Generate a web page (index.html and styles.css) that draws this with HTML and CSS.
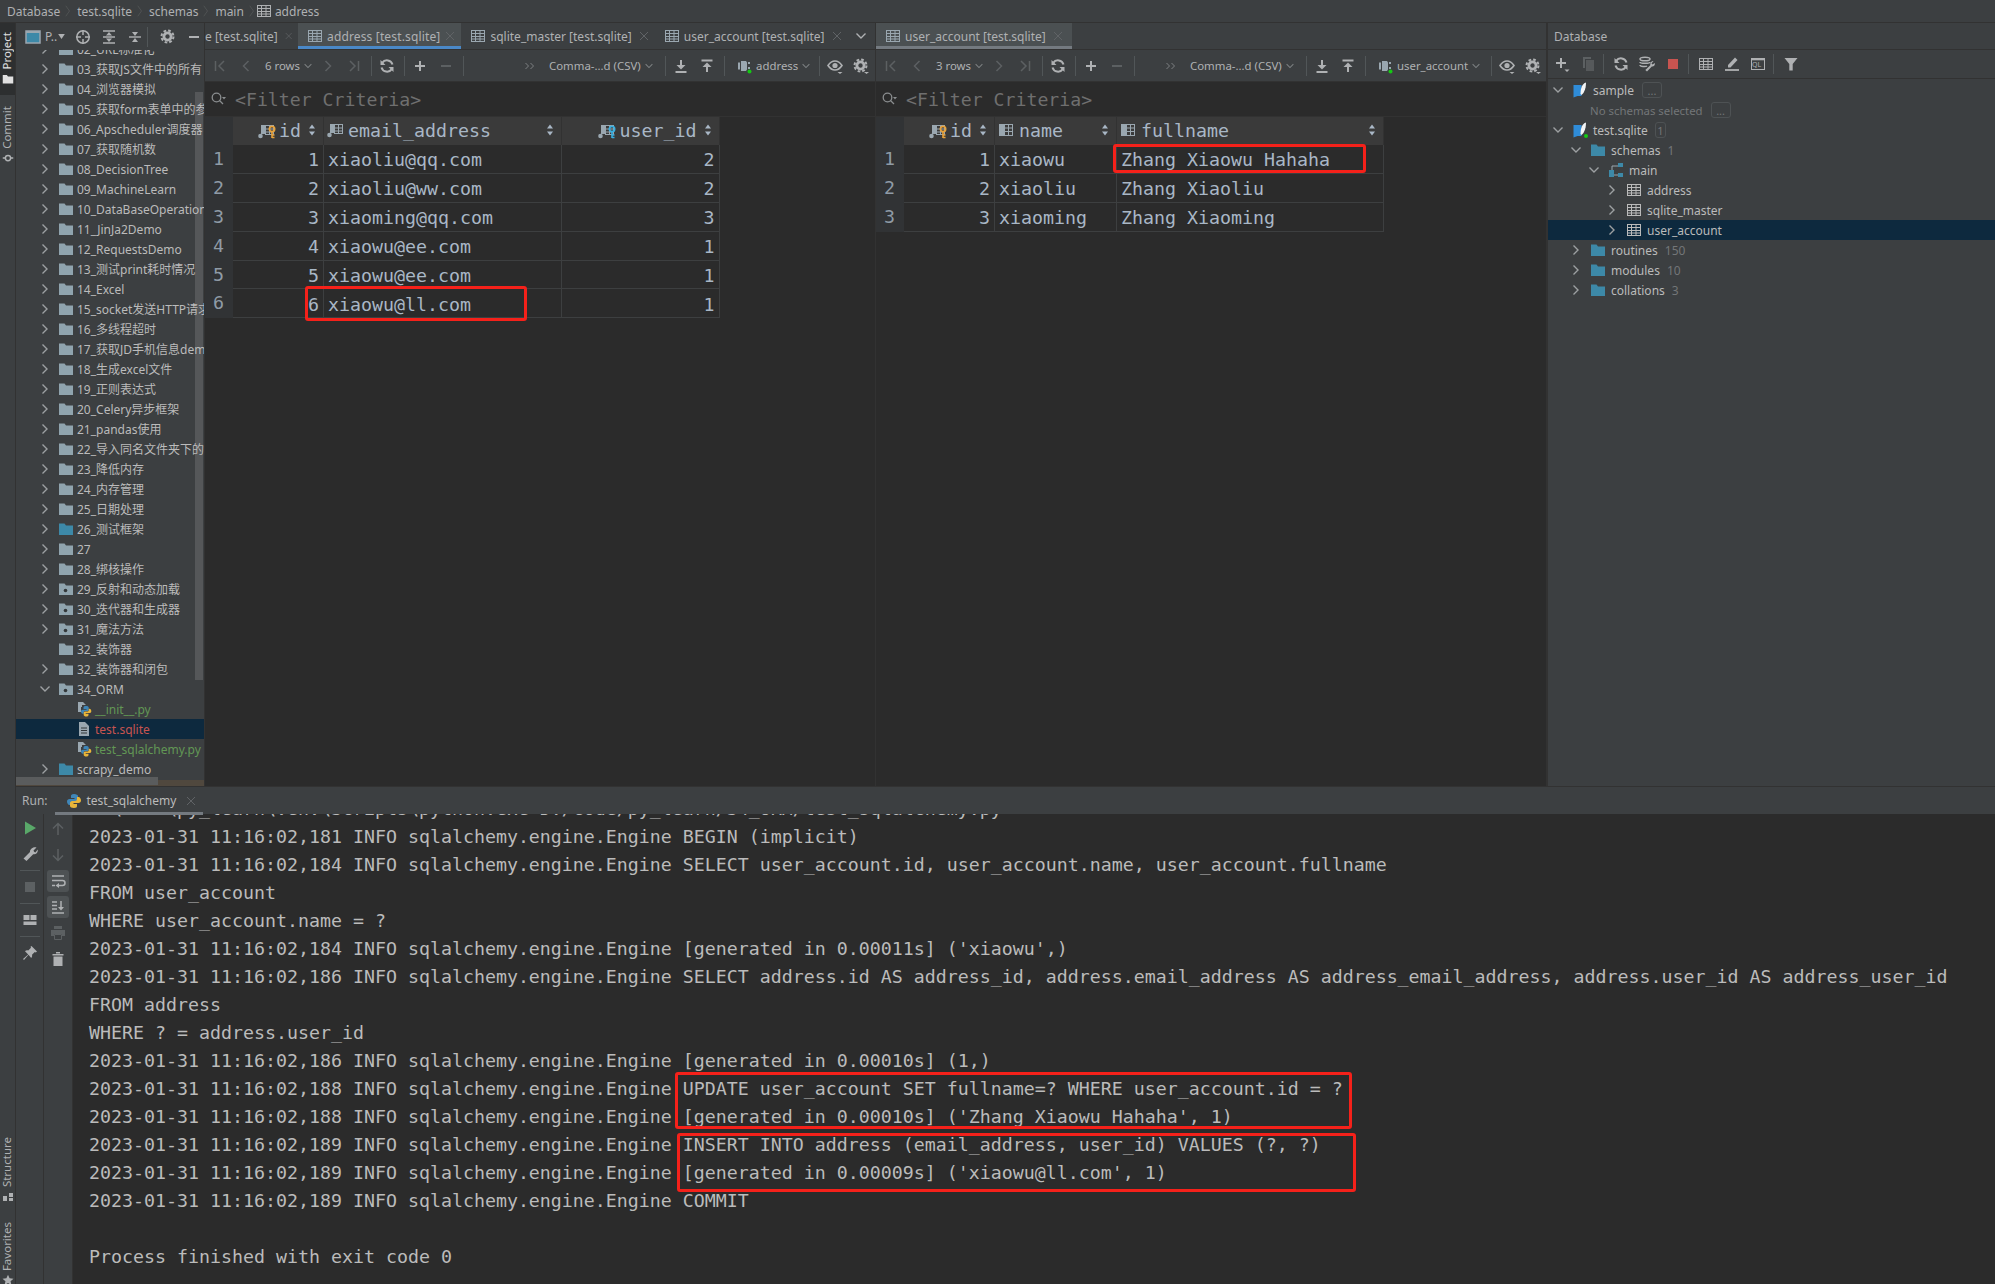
FILE: index.html
```html
<!DOCTYPE html>
<html lang="en">
<head>
    <meta charset="UTF-8">
    <title>test.sqlite - address</title>
    <link rel="stylesheet" href="styles.css">
</head>
<body>

<svg class="sprite" xmlns="http://www.w3.org/2000/svg">
    <symbol id="chev-r" viewBox="0 0 16 16"><path d="M5.5 3.5 10 8l-4.500 4.500" fill="none" stroke="currentColor" stroke-width="1.400"/></symbol>
    <symbol id="chev-d" viewBox="0 0 16 16"><path d="M3.500 5.500 8 10l4.500-4.500" fill="none" stroke="currentColor" stroke-width="1.400"/></symbol>
    <symbol id="folder" viewBox="0 0 16 16"><path d="M1 2.500h5.500L8 4.500h7v9.500H1z" fill="currentColor"/></symbol>
    <symbol id="folder-dot" viewBox="0 0 16 16"><path d="M1 2.500h5.500L8 4.500h7v9.500H1z" fill="currentColor"/><circle cx="7.500" cy="9.500" r="1.800" fill="#33383a"/></symbol>
    <symbol id="table" viewBox="0 0 16 16"><g fill="none" stroke="currentColor"><rect x="1.500" y="2.500" width="13" height="11"/><path d="M1.500 5.500h13M1.500 8.500h13M1.500 11h13M5.500 2.500v11M10 2.500v11"/></g></symbol>
    <symbol id="first" viewBox="0 0 16 16"><path d="M3.500 3v10M12 3 7 8l5 5" fill="none" stroke="currentColor" stroke-width="1.500"/></symbol>
    <symbol id="prev" viewBox="0 0 16 16"><path d="M10.500 3 5.500 8l5 5" fill="none" stroke="currentColor" stroke-width="1.500"/></symbol>
    <symbol id="next" viewBox="0 0 16 16"><path d="m5.500 3 5 5-5 5" fill="none" stroke="currentColor" stroke-width="1.500"/></symbol>
    <symbol id="last" viewBox="0 0 16 16"><path d="M12.500 3v10M4 3l5 5-5 5" fill="none" stroke="currentColor" stroke-width="1.500"/></symbol>
    <symbol id="refresh" viewBox="0 0 16 16"><g fill="none" stroke="currentColor" stroke-width="2"><path d="M13.500 6.500A5.800 5.800 0 0 0 3.200 4.800"/><path d="M2.500 9.500a5.800 5.800 0 0 0 10.300 1.700"/></g><path d="M1.500 2v5h5zM14.500 14V9h-5z" fill="currentColor"/></symbol>
    <symbol id="plus" viewBox="0 0 16 16"><path d="M8 3v10M3 8h10" stroke="currentColor" stroke-width="2"/></symbol>
    <symbol id="plus-drop" viewBox="0 0 16 16"><path d="M7 2v10M2 7h10" stroke="currentColor" stroke-width="2"/><path d="M10.500 13.500h5L13 16z" fill="currentColor"/></symbol>
    <symbol id="minus" viewBox="0 0 16 16"><path d="M3 8h10" stroke="currentColor" stroke-width="2"/></symbol>
    <symbol id="more" viewBox="0 0 16 16"><path d="m3.500 5 3 3-3 3M8.500 5l3 3-3 3" fill="none" stroke="currentColor"/></symbol>
    <symbol id="download" viewBox="0 0 16 16"><path d="M2.500 14h11" stroke="currentColor" stroke-width="2"/><path d="M8 2v7" stroke="currentColor" stroke-width="2"/><path d="M3.500 7h9L8 11.500z" fill="currentColor"/></symbol>
    <symbol id="upload" viewBox="0 0 16 16"><path d="M2.500 2.500h11" stroke="currentColor" stroke-width="2"/><path d="M8 14V7" stroke="currentColor" stroke-width="2"/><path d="M3.500 9h9L8 4.500z" fill="currentColor"/></symbol>
    <symbol id="datasource" viewBox="0 0 16 16"><path d="M1 4.500h2v7H1zM4 3h5l1 1.500v7L9 13H4z" fill="currentColor"/><path d="M11 4h2v2h-2zM11 9h2v2h-2z" fill="currentColor"/><circle cx="12.500" cy="13.500" r="2" fill="#14c914"/></symbol>
    <symbol id="eye" viewBox="0 0 16 16"><path d="M1 7.500C3 4.500 5.300 3 8 3s5 1.500 7 4.500c-2 3-4.300 4.500-7 4.500S3 10.500 1 7.500z" fill="none" stroke="currentColor" stroke-width="1.600"/><circle cx="8" cy="7.500" r="2.600" fill="currentColor"/><path d="M10.500 14h5L13 16z" fill="currentColor"/></symbol>
    <symbol id="gear" viewBox="0 0 16 16"><circle cx="7.500" cy="7.500" r="3.600" fill="none" stroke="currentColor" stroke-width="2.800"/><circle cx="7.500" cy="7.500" r="6" fill="none" stroke="currentColor" stroke-width="2" stroke-dasharray="2.700 2"/></symbol>
    <symbol id="gear-drop" viewBox="0 0 16 16"><use href="#gear"/><path d="M11 14h5l-2.500 2z" fill="currentColor"/></symbol>
    <symbol id="search" viewBox="0 0 16 16"><circle cx="6.500" cy="6.500" r="4.300" fill="none" stroke="currentColor" stroke-width="1.300"/><path d="m9.500 9.500 3.500 3.500" stroke="currentColor" stroke-width="1.300"/><path d="M12 6h4l-2 2.500z" fill="currentColor"/></symbol>
    <symbol id="close" viewBox="0 0 10 10"><path d="m1 1 8 8M9 1 1 9" stroke="currentColor"/></symbol>
    <symbol id="sort" viewBox="0 0 10 14"><path d="M5 1.500 8 5.500H2zM5 12.500 2 8.500h6z" fill="currentColor"/></symbol>
    <symbol id="col" viewBox="0 0 16 16"><path d="M1 2h5v12H1z" fill="currentColor"/><g fill="none" stroke="currentColor"><rect x="6.500" y="2.500" width="8" height="11"/><path d="M6.500 6h8M6.500 9.500h8M10.500 2.500v11"/></g></symbol>
    <symbol id="col-fk" viewBox="0 0 16 16"><path d="M3 2h4v9H3z" fill="currentColor"/><g fill="none" stroke="currentColor"><rect x="7.500" y="2.500" width="8" height="9"/><path d="M7.500 6h8M7.500 9h8M11.500 2.500v9"/></g><circle cx="2.500" cy="13" r="2.300" fill="currentColor"/></symbol>
    <symbol id="key" viewBox="0 0 8 14"><circle cx="4" cy="4" r="2.600" fill="none" stroke="currentColor" stroke-width="1.800"/><path d="M4 6.500V13M4 10h2.500M4 12.500h2.500" stroke="currentColor" stroke-width="1.600"/></symbol>
    <symbol id="window" viewBox="0 0 16 16"><rect x="1" y="2" width="14" height="12" fill="#3d89a8" stroke="#9aa7b0" stroke-width="1.500"/><path d="M1 3h14" stroke="#9aa7b0" stroke-width="2"/></symbol>
    <symbol id="crosshair" viewBox="0 0 16 16"><circle cx="8" cy="8" r="6.200" fill="none" stroke="currentColor" stroke-width="1.500"/><path d="M8 1v5M8 10v5M1 8h5M10 8h5" stroke="currentColor" stroke-width="1.500"/></symbol>
    <symbol id="expand" viewBox="0 0 16 16"><path d="M2 2h12M2 14h12M2 8h12" stroke="currentColor" stroke-width="1.400"/><path d="M8 3 11 6.500H5zM8 13 5 9.500h6z" fill="currentColor"/></symbol>
    <symbol id="collapse" viewBox="0 0 16 16"><path d="M2 8h12" stroke="currentColor" stroke-width="1.400"/><path d="M8 7 5 3h6zM8 9l3 4H5z" fill="currentColor"/></symbol>
    <symbol id="copy" viewBox="0 0 16 16"><path d="M3 1h8v2H5v9H3z" fill="currentColor"/><path d="M6 4h8v11H6z" fill="currentColor" opacity=".8"/></symbol>
    <symbol id="tools" viewBox="0 0 16 16"><g fill="none" stroke="currentColor" stroke-width="1.500"><ellipse cx="6" cy="3" rx="5" ry="1.800"/><path d="M1 6c0 1.800 10 1.800 10 0M1 9c0 1.800 6 1.800 7 1"/></g><path d="m14.500 5-2 2.500 1 1L15.800 7c.5 2-1 4-3 3.500L8 15.500 6.300 14l5-4.800c-.5-2 1.300-4.500 3.200-4.200z" fill="currentColor"/></symbol>
    <symbol id="edit" viewBox="0 0 16 16"><path d="M1 14h14" stroke="currentColor" stroke-width="1.800"/><path d="M4 11.500V9l7-7.500 2.500 2.500-7 7.500z" fill="currentColor"/></symbol>
    <symbol id="ql" viewBox="0 0 16 16"><rect x="1.500" y="2.500" width="13" height="11" fill="none" stroke="currentColor"/><path d="M1.500 3.500h13" stroke="currentColor" stroke-width="1.600"/></symbol>
    <symbol id="filter" viewBox="0 0 16 16"><path d="M1.500 2h13L9.700 8v6.500H6.300V8z" fill="currentColor"/></symbol>
    <symbol id="sqlite" viewBox="0 0 16 16"><path d="M1.500 3h8v11h-4l-4 1.500z" fill="#2f8cd8"/><path d="M14 .5c-2.500.5-4.200 3-5 6.500-.3 1.500-.5 3-.5 5l1 1c2-1.500 4.500-5.500 4.500-12.500z" fill="#f2f4f5"/></symbol>
    <symbol id="schema" viewBox="0 0 16 16"><path d="M10 1h5v4h-5zM1 8h5v7H1zM10 11h5v4h-5z" fill="#3d89a8"/><path d="M4 8V4h6M6 13h4" fill="none" stroke="#9aa7b0"/></symbol>
    <symbol id="py" viewBox="0 0 16 16"><path d="M8 1C5.500 1 5 2 5 3v2h3.500v1H3.500C2 6 1 7 1 8.500S2 12 3.500 12H5v-2c0-1 1-2 2-2h3c1 0 2-1 2-2V3c0-1-1.500-2-4-2z" fill="#3f86b8"/><path d="M8 15c2.500 0 3-1 3-2v-2H7.500v-1h5c1.500 0 2.500-1 2.500-2.500S14 4 12.500 4H11v2c0 1-1 2-2 2H6c-1 0-2 1-2 2v3c0 1 1.500 2 4 2z" fill="#e8b53a"/></symbol>
    <symbol id="py-file" viewBox="0 0 16 16"><path d="M2 6V1h5l3 3H6v2zM2 6h3v5H2z" fill="#9aa7b0"/><path d="M10 5c-2 0-2.500.7-2.500 1.500V8h3v.7H6.800C5.700 8.700 5 9.500 5 10.500s.7 2.300 1.800 2.300h.9v-1.300c0-.8.7-1.400 1.500-1.400h2c.8 0 1.500-.7 1.500-1.500V6.500C12.700 5.700 11.800 5 10 5z" fill="#3f86b8"/><path d="M10 15.500c2 0 2.500-.7 2.500-1.500v-1.300h-2.800V12h3.800c1.100 0 1.800-.8 1.800-1.800s-.7-2.400-1.800-2.400h-.8V9c0 .9-.7 1.600-1.500 1.600h-2c-.8 0-1.500.6-1.500 1.400V14c0 .8 1 1.500 2.800 1.500z" fill="#e8b53a"/></symbol>
    <symbol id="doc" viewBox="0 0 16 16"><path d="M3 1h6l4 4v10H3z" fill="#9aa7b0"/><path d="M5 7h6M5 9.500h6M5 12h6" stroke="#33383a"/></symbol>
    <symbol id="play" viewBox="0 0 16 16"><path d="M3 1.500 14 8 3 14.500z" fill="#59a869"/></symbol>
    <symbol id="wrench" viewBox="0 0 16 16"><path d="M14.500 1.500 11.500 4.500l.6 1.300 1.300.6 2.300-2.800c.6 2.800-1.800 5.300-4.500 4.600L4.500 15 1.500 12.500 8 6c-.5-2.700 3.500-5.500 6.500-4.500z" fill="currentColor"/></symbol>
    <symbol id="stop" viewBox="0 0 16 16"><rect x="3" y="3" width="10" height="10" fill="currentColor"/></symbol>
    <symbol id="layout" viewBox="0 0 16 16"><path d="M1.500 3h6v5h-6zM8.500 3h6v5h-6zM1.500 9.500h13V13h-13z" fill="currentColor"/></symbol>
    <symbol id="pin" viewBox="0 0 16 16"><path d="m9.500 1 5.500 5.500-1.200 1-1-.5-2.800 2.800c.4 1.400 0 2.500-.8 3.200L6.500 9.800 2 15l-1-1 5.200-4.500L3 6.300c.7-.8 1.800-1.200 3.200-.8L9 2.700l-.5-1z" fill="currentColor"/></symbol>
    <symbol id="up" viewBox="0 0 16 16"><path d="M8 14V3M3 7.500 8 2.500l5 5" fill="none" stroke="currentColor" stroke-width="1.500"/></symbol>
    <symbol id="down" viewBox="0 0 16 16"><path d="M8 2v11M3 8.500l5 5 5-5" fill="none" stroke="currentColor" stroke-width="1.500"/></symbol>
    <symbol id="wrap" viewBox="0 0 16 16"><path d="M2 3h12M2 7.500h10.500a2.300 2.300 0 0 1 0 5H8M2 12.500h3" fill="none" stroke="currentColor" stroke-width="1.500"/><path d="M9 10v5l-3.500-2.500z" fill="currentColor"/></symbol>
    <symbol id="scroll" viewBox="0 0 16 16"><path d="M2 14h12M2 3h5M2 6.500h5M2 10h5M11 2v7" fill="none" stroke="currentColor" stroke-width="1.500"/><path d="M8 8h6l-3 3.500z" fill="currentColor"/></symbol>
    <symbol id="print" viewBox="0 0 16 16"><path d="M4 1h8v3H4zM1 5h14v6h-3V9H4v2H1z" fill="currentColor"/><path d="M4.500 9.500h7v5h-7z" fill="none" stroke="currentColor"/></symbol>
    <symbol id="trash" viewBox="0 0 16 16"><path d="M2.500 3h11v1.500h-11zM6 1h4v1.500H6zM3.500 5.500h9V15h-9z" fill="currentColor"/></symbol>
    <symbol id="squares" viewBox="0 0 12 12"><path d="M1 6h4v5H1zM7 8h4v3H7zM7 3h4v4H7z" fill="currentColor"/></symbol>
    <symbol id="star" viewBox="0 0 16 16"><path d="m8 1 2.100 4.800 5.200.5-3.900 3.400 1.200 5.100L8 12.100l-4.600 2.700 1.200-5.100L.7 6.300l5.200-.5z" fill="currentColor"/></symbol>
</svg>

<div class="ide">

    <!-- barre du haut -->
    <nav class="crumbs">
        <span>Database</span><svg class="crumb-sep" viewBox="0 0 8 16"><path d="m1 1 5 7-5 7" fill="none" stroke="currentColor"/></svg>
        <span>test.sqlite</span><svg class="crumb-sep" viewBox="0 0 8 16"><path d="m1 1 5 7-5 7" fill="none" stroke="currentColor"/></svg>
        <span>schemas</span><svg class="crumb-sep" viewBox="0 0 8 16"><path d="m1 1 5 7-5 7" fill="none" stroke="currentColor"/></svg>
        <span>main</span><svg class="crumb-sep" viewBox="0 0 8 16"><path d="m1 1 5 7-5 7" fill="none" stroke="currentColor"/></svg>
        <svg class="icon crumb-icon"><use href="#table"/></svg><span>address</span>
    </nav>

    <div class="main">

        <aside class="strip">
            <div class="strip-tab strip-active"><span>Project</span><svg class="strip-icon"><use href="#folder"/></svg></div>
            <div class="strip-tab strip-commit"><span>Commit</span><svg class="strip-icon" viewBox="0 0 16 16"><circle cx="8" cy="8" r="3.500" fill="none" stroke="currentColor" stroke-width="2"/><path d="M1 8h3M12 8h3" stroke="currentColor" stroke-width="2"/></svg></div>
            <div class="strip-tab strip-structure"><span>Structure</span><svg class="strip-icon"><use href="#squares"/></svg></div>
            <div class="strip-tab strip-favorites"><span>Favorites</span><svg class="strip-icon"><use href="#star"/></svg></div>
        </aside>

        <div class="workspace">
            <div class="top">

                <!-- Project -->
                <section class="project">
                    <div class="project-head">
                        <svg class="icon"><use href="#window"/></svg>
                        <span class="project-title">P..</span>
                        <svg class="project-drop" viewBox="0 0 8 6"><path d="M0 0h8L4 6z" fill="currentColor"/></svg>
                        <svg class="icon icon-cross"><use href="#crosshair"/></svg>
                        <svg class="icon icon-head"><use href="#expand"/></svg>
                        <svg class="icon icon-head"><use href="#collapse"/></svg>
                        <i class="sep sep-head"></i>
                        <svg class="icon icon-gear"><use href="#gear"/></svg>
                        <svg class="icon icon-head"><use href="#minus"/></svg>
                    </div>
                    <div class="vscroll"></div>
                    <div class="file-tree">
                        <div class="row"><svg class="arrow"><use href="#chev-r"/></svg><svg class="icon folder"><use href="#folder"/></svg><span>02_URL标准化</span></div>
                        <div class="row"><svg class="arrow"><use href="#chev-r"/></svg><svg class="icon folder"><use href="#folder"/></svg><span>03_获取JS文件中的所有</span></div>
                        <div class="row"><svg class="arrow"><use href="#chev-r"/></svg><svg class="icon folder"><use href="#folder"/></svg><span>04_浏览器模拟</span></div>
                        <div class="row"><svg class="arrow"><use href="#chev-r"/></svg><svg class="icon folder"><use href="#folder"/></svg><span>05_获取form表单中的参数</span></div>
                        <div class="row"><svg class="arrow"><use href="#chev-r"/></svg><svg class="icon folder"><use href="#folder"/></svg><span>06_Apscheduler调度器</span></div>
                        <div class="row"><svg class="arrow"><use href="#chev-r"/></svg><svg class="icon folder"><use href="#folder"/></svg><span>07_获取随机数</span></div>
                        <div class="row"><svg class="arrow"><use href="#chev-r"/></svg><svg class="icon folder"><use href="#folder"/></svg><span>08_DecisionTree</span></div>
                        <div class="row"><svg class="arrow"><use href="#chev-r"/></svg><svg class="icon folder"><use href="#folder"/></svg><span>09_MachineLearn</span></div>
                        <div class="row"><svg class="arrow"><use href="#chev-r"/></svg><svg class="icon folder"><use href="#folder"/></svg><span>10_DataBaseOperation</span></div>
                        <div class="row"><svg class="arrow"><use href="#chev-r"/></svg><svg class="icon folder"><use href="#folder"/></svg><span>11_JinJa2Demo</span></div>
                        <div class="row"><svg class="arrow"><use href="#chev-r"/></svg><svg class="icon folder"><use href="#folder"/></svg><span>12_RequestsDemo</span></div>
                        <div class="row"><svg class="arrow"><use href="#chev-r"/></svg><svg class="icon folder"><use href="#folder"/></svg><span>13_测试print耗时情况</span></div>
                        <div class="row"><svg class="arrow"><use href="#chev-r"/></svg><svg class="icon folder"><use href="#folder"/></svg><span>14_Excel</span></div>
                        <div class="row"><svg class="arrow"><use href="#chev-r"/></svg><svg class="icon folder"><use href="#folder"/></svg><span>15_socket发送HTTP请求</span></div>
                        <div class="row"><svg class="arrow"><use href="#chev-r"/></svg><svg class="icon folder"><use href="#folder"/></svg><span>16_多线程超时</span></div>
                        <div class="row"><svg class="arrow"><use href="#chev-r"/></svg><svg class="icon folder"><use href="#folder"/></svg><span>17_获取JD手机信息demo</span></div>
                        <div class="row"><svg class="arrow"><use href="#chev-r"/></svg><svg class="icon folder"><use href="#folder"/></svg><span>18_生成excel文件</span></div>
                        <div class="row"><svg class="arrow"><use href="#chev-r"/></svg><svg class="icon folder"><use href="#folder"/></svg><span>19_正则表达式</span></div>
                        <div class="row"><svg class="arrow"><use href="#chev-r"/></svg><svg class="icon folder"><use href="#folder"/></svg><span>20_Celery异步框架</span></div>
                        <div class="row"><svg class="arrow"><use href="#chev-r"/></svg><svg class="icon folder"><use href="#folder"/></svg><span>21_pandas使用</span></div>
                        <div class="row"><svg class="arrow"><use href="#chev-r"/></svg><svg class="icon folder"><use href="#folder"/></svg><span>22_导入同名文件夹下的</span></div>
                        <div class="row"><svg class="arrow"><use href="#chev-r"/></svg><svg class="icon folder"><use href="#folder"/></svg><span>23_降低内存</span></div>
                        <div class="row"><svg class="arrow"><use href="#chev-r"/></svg><svg class="icon folder"><use href="#folder"/></svg><span>24_内存管理</span></div>
                        <div class="row"><svg class="arrow"><use href="#chev-r"/></svg><svg class="icon folder"><use href="#folder"/></svg><span>25_日期处理</span></div>
                        <div class="row"><svg class="arrow"><use href="#chev-r"/></svg><svg class="icon folder-blue"><use href="#folder"/></svg><span>26_测试框架</span></div>
                        <div class="row"><svg class="arrow"><use href="#chev-r"/></svg><svg class="icon folder"><use href="#folder"/></svg><span>27</span></div>
                        <div class="row"><svg class="arrow"><use href="#chev-r"/></svg><svg class="icon folder"><use href="#folder"/></svg><span>28_绑核操作</span></div>
                        <div class="row"><svg class="arrow"><use href="#chev-r"/></svg><svg class="icon folder"><use href="#folder-dot"/></svg><span>29_反射和动态加载</span></div>
                        <div class="row"><svg class="arrow"><use href="#chev-r"/></svg><svg class="icon folder"><use href="#folder-dot"/></svg><span>30_迭代器和生成器</span></div>
                        <div class="row"><svg class="arrow"><use href="#chev-r"/></svg><svg class="icon folder"><use href="#folder-dot"/></svg><span>31_魔法方法</span></div>
                        <div class="row row-leaf"><svg class="icon folder"><use href="#folder"/></svg><span>32_装饰器</span></div>
                        <div class="row"><svg class="arrow"><use href="#chev-r"/></svg><svg class="icon folder"><use href="#folder"/></svg><span>32_装饰器和闭包</span></div>
                        <div class="row"><svg class="arrow"><use href="#chev-d"/></svg><svg class="icon folder"><use href="#folder-dot"/></svg><span>34_ORM</span></div>
                        <div class="row row-file"><svg class="icon"><use href="#py-file"/></svg><span class="txt-added">__init__.py</span></div>
                        <div class="row row-file row-selected"><svg class="icon"><use href="#doc"/></svg><span class="txt-ignored">test.sqlite</span></div>
                        <div class="row row-file"><svg class="icon"><use href="#py-file"/></svg><span class="txt-added">test_sqlalchemy.py</span></div>
                        <div class="row"><svg class="arrow"><use href="#chev-r"/></svg><svg class="icon folder-blue"><use href="#folder"/></svg><span>scrapy_demo</span></div>
                        <div class="row"><svg class="arrow"><use href="#chev-r"/></svg><svg class="icon folder"><use href="#folder"/></svg><span>venv</span></div>
                    </div>
                    <div class="hscroll-track"></div>
                    <div class="hscroll"></div>
                </section>

                <!-- table address -->
                <section class="pane">
                    <div class="tabs">
                        <div class="tab tab-clipped"><span>e [test.sqlite]</span><svg class="tab-close"><use href="#close"/></svg></div>
                        <div class="tab tab-active"><svg class="icon"><use href="#table"/></svg><span>address [test.sqlite]</span><svg class="tab-close"><use href="#close"/></svg></div>
                        <div class="tab"><svg class="icon"><use href="#table"/></svg><span>sqlite_master [test.sqlite]</span><svg class="tab-close"><use href="#close"/></svg></div>
                        <div class="tab"><svg class="icon"><use href="#table"/></svg><span>user_account [test.sqlite]</span><svg class="tab-close"><use href="#close"/></svg></div>
                        <svg class="icon tabs-more"><use href="#chev-d"/></svg>
                    </div>
                    <div class="toolbar">
                        <span class="tb tb-off"><svg class="icon"><use href="#first"/></svg></span>
                        <span class="tb tb-off"><svg class="icon"><use href="#prev"/></svg></span>
                        <span class="tb-label tb-rows">6 rows<svg class="mini-chev"><use href="#chev-d"/></svg></span>
                        <span class="tb tb-off"><svg class="icon"><use href="#next"/></svg></span>
                        <span class="tb tb-off"><svg class="icon"><use href="#last"/></svg></span>
                        <i class="sep"></i>
                        <span class="tb"><svg class="icon"><use href="#refresh"/></svg></span>
                        <i class="sep"></i>
                        <span class="tb"><svg class="icon"><use href="#plus"/></svg></span>
                        <span class="tb tb-off"><svg class="icon"><use href="#minus"/></svg></span>
                        <i class="sep"></i>
                        <span class="tb-more tb-more-wide"><svg class="icon"><use href="#more"/></svg></span>
                        <span class="tb-label tb-format">Comma-...d (CSV)<svg class="mini-chev"><use href="#chev-d"/></svg></span>
                        <i class="sep"></i>
                        <span class="tb"><svg class="icon"><use href="#download"/></svg></span>
                        <span class="tb"><svg class="icon"><use href="#upload"/></svg></span>
                        <i class="sep"></i>
                        <span class="tb-label tb-source"><svg class="icon"><use href="#datasource"/></svg>address<svg class="mini-chev"><use href="#chev-d"/></svg></span>
                        <i class="sep"></i>
                        <span class="tb"><svg class="icon"><use href="#eye"/></svg></span>
                        <span class="tb"><svg class="icon"><use href="#gear-drop"/></svg></span>
                    </div>
                    <div class="filter"><svg class="icon"><use href="#search"/></svg><span>&lt;Filter Criteria&gt;</span></div>
                    <div class="grid grid-address">
                        <div class="th-gutter"></div>
                        <div class="th th-num"><span class="col-icon"><svg class="icon"><use href="#col-fk"/></svg><svg class="key key-pk"><use href="#key"/></svg></span><span>id</span><svg class="sort"><use href="#sort"/></svg></div>
                        <div class="th"><svg class="icon"><use href="#col-fk"/></svg><span class="th-name">email_address</span><svg class="sort"><use href="#sort"/></svg></div>
                        <div class="th th-num"><span class="col-icon"><svg class="icon"><use href="#col-fk"/></svg><svg class="key key-fk"><use href="#key"/></svg></span><span>user_id</span><svg class="sort"><use href="#sort"/></svg></div>

                        <div class="gutter">1</div><div class="td td-num">1</div><div class="td">xiaoliu@qq.com</div><div class="td td-num">2</div>
                        <div class="gutter">2</div><div class="td td-num">2</div><div class="td">xiaoliu@ww.com</div><div class="td td-num">2</div>
                        <div class="gutter">3</div><div class="td td-num">3</div><div class="td">xiaoming@qq.com</div><div class="td td-num">3</div>
                        <div class="gutter">4</div><div class="td td-num">4</div><div class="td">xiaowu@ee.com</div><div class="td td-num">1</div>
                        <div class="gutter">5</div><div class="td td-num">5</div><div class="td">xiaowu@ee.com</div><div class="td td-num">1</div>
                        <div class="gutter">6</div><div class="td td-num">6</div><div class="td">xiaowu@ll.com</div><div class="td td-num">1</div>
                    </div>
                </section>

                <!-- table user_account -->
                <section class="pane">
                    <div class="tabs">
                        <div class="tab tab-current"><svg class="icon"><use href="#table"/></svg><span>user_account [test.sqlite]</span><svg class="tab-close"><use href="#close"/></svg></div>
                    </div>
                    <div class="toolbar">
                        <span class="tb tb-off"><svg class="icon"><use href="#first"/></svg></span>
                        <span class="tb tb-off"><svg class="icon"><use href="#prev"/></svg></span>
                        <span class="tb-label tb-rows">3 rows<svg class="mini-chev"><use href="#chev-d"/></svg></span>
                        <span class="tb tb-off"><svg class="icon"><use href="#next"/></svg></span>
                        <span class="tb tb-off"><svg class="icon"><use href="#last"/></svg></span>
                        <i class="sep"></i>
                        <span class="tb"><svg class="icon"><use href="#refresh"/></svg></span>
                        <i class="sep"></i>
                        <span class="tb"><svg class="icon"><use href="#plus"/></svg></span>
                        <span class="tb tb-off"><svg class="icon"><use href="#minus"/></svg></span>
                        <i class="sep"></i>
                        <span class="tb-more"><svg class="icon"><use href="#more"/></svg></span>
                        <span class="tb-label tb-format">Comma-...d (CSV)<svg class="mini-chev"><use href="#chev-d"/></svg></span>
                        <i class="sep"></i>
                        <span class="tb"><svg class="icon"><use href="#download"/></svg></span>
                        <span class="tb"><svg class="icon"><use href="#upload"/></svg></span>
                        <i class="sep"></i>
                        <span class="tb-label tb-source tb-source-wide"><svg class="icon"><use href="#datasource"/></svg>user_account<svg class="mini-chev"><use href="#chev-d"/></svg></span>
                        <i class="sep"></i>
                        <span class="tb"><svg class="icon"><use href="#eye"/></svg></span>
                        <span class="tb"><svg class="icon"><use href="#gear-drop"/></svg></span>
                    </div>
                    <div class="filter"><svg class="icon"><use href="#search"/></svg><span>&lt;Filter Criteria&gt;</span></div>
                    <div class="grid grid-account">
                        <div class="th-gutter"></div>
                        <div class="th th-num"><span class="col-icon"><svg class="icon"><use href="#col-fk"/></svg><svg class="key key-pk"><use href="#key"/></svg></span><span>id</span><svg class="sort"><use href="#sort"/></svg></div>
                        <div class="th"><svg class="icon"><use href="#col"/></svg><span class="th-name">name</span><svg class="sort"><use href="#sort"/></svg></div>
                        <div class="th"><svg class="icon"><use href="#col"/></svg><span class="th-name">fullname</span><svg class="sort"><use href="#sort"/></svg></div>

                        <div class="gutter">1</div><div class="td td-num">1</div><div class="td">xiaowu</div><div class="td">Zhang Xiaowu Hahaha</div>
                        <div class="gutter">2</div><div class="td td-num">2</div><div class="td">xiaoliu</div><div class="td">Zhang Xiaoliu</div>
                        <div class="gutter">3</div><div class="td td-num">3</div><div class="td">xiaoming</div><div class="td">Zhang Xiaoming</div>
                    </div>
                </section>

                <!-- Database -->
                <section class="database">
                    <div class="db-head">Database</div>
                    <div class="db-toolbar">
                        <span class="tb"><svg class="icon"><use href="#plus-drop"/></svg></span>
                        <span class="tb tb-off"><svg class="icon"><use href="#copy"/></svg></span>
                        <i class="sep sep-db"></i>
                        <span class="tb"><svg class="icon"><use href="#refresh"/></svg></span>
                        <span class="tb"><svg class="icon"><use href="#tools"/></svg></span>
                        <span class="tb tb-stop"><svg class="icon"><use href="#stop"/></svg></span>
                        <i class="sep sep-db"></i>
                        <span class="tb"><svg class="icon"><use href="#table"/></svg></span>
                        <span class="tb"><svg class="icon"><use href="#edit"/></svg></span>
                        <span class="tb tb-ql"><svg class="icon"><use href="#ql"/></svg><b>QL</b></span>
                        <i class="sep sep-db"></i>
                        <span class="tb"><svg class="icon"><use href="#filter"/></svg></span>
                    </div>
                    <div class="db-tree">
                        <div class="db-row lvl0"><svg class="arrow"><use href="#chev-d"/></svg><svg class="icon"><use href="#sqlite"/></svg><span class="db-name">sample</span><span class="badge">...</span></div>
                        <div class="db-row lvl0 db-none"><span class="txt-dim">No schemas selected</span><span class="badge">...</span></div>
                        <div class="db-row lvl0"><svg class="arrow"><use href="#chev-d"/></svg><span class="db-live"><svg class="icon"><use href="#sqlite"/></svg></span><span class="db-live-name">test.sqlite</span><span class="badge badge-num">1</span></div>
                        <div class="db-row lvl1"><svg class="arrow"><use href="#chev-d"/></svg><svg class="icon folder-blue"><use href="#folder"/></svg><span>schemas</span><span class="count">1</span></div>
                        <div class="db-row lvl2"><svg class="arrow"><use href="#chev-d"/></svg><svg class="icon"><use href="#schema"/></svg><span>main</span></div>
                        <div class="db-row lvl3"><svg class="arrow"><use href="#chev-r"/></svg><svg class="icon"><use href="#table"/></svg><span>address</span></div>
                        <div class="db-row lvl3"><svg class="arrow"><use href="#chev-r"/></svg><svg class="icon"><use href="#table"/></svg><span>sqlite_master</span></div>
                        <div class="db-row lvl3 row-selected"><svg class="arrow"><use href="#chev-r"/></svg><svg class="icon"><use href="#table"/></svg><span>user_account</span></div>
                        <div class="db-row lvl1"><svg class="arrow"><use href="#chev-r"/></svg><svg class="icon folder-blue"><use href="#folder"/></svg><span>routines</span><span class="count">150</span></div>
                        <div class="db-row lvl1"><svg class="arrow"><use href="#chev-r"/></svg><svg class="icon folder-blue"><use href="#folder"/></svg><span>modules</span><span class="count">10</span></div>
                        <div class="db-row lvl1"><svg class="arrow"><use href="#chev-r"/></svg><svg class="icon folder-blue"><use href="#folder"/></svg><span>collations</span><span class="count">3</span></div>
                    </div>
                </section>
            </div>

            <!-- Run -->
            <section class="run">
                <div class="run-head">
                    <span class="run-label">Run:</span>
                    <div class="run-tab"><svg class="icon"><use href="#py"/></svg><span>test_sqlalchemy</span><svg class="tab-close"><use href="#close"/></svg></div>
                </div>
                <div class="run-body">
                    <div class="run-tools">
                        <svg class="icon"><use href="#play"/></svg>
                        <svg class="icon tool-wrench"><use href="#wrench"/></svg>
                        <i class="hsep"></i>
                        <svg class="icon tool-off"><use href="#stop"/></svg>
                        <i class="hsep"></i>
                        <svg class="icon"><use href="#layout"/></svg>
                        <i class="hsep"></i>
                        <svg class="icon"><use href="#pin"/></svg>
                    </div>
                    <div class="run-tools run-tools-second">
                        <svg class="icon tool-off"><use href="#up"/></svg>
                        <svg class="icon tool-off"><use href="#down"/></svg>
                        <span class="tool-on"><svg class="icon"><use href="#wrap"/></svg></span>
                        <span class="tool-on"><svg class="icon"><use href="#scroll"/></svg></span>
                        <svg class="icon tool-off"><use href="#print"/></svg>
                        <svg class="icon"><use href="#trash"/></svg>
                    </div>
                    <pre class="console">
<div class="line">D:\code\py_learn\venv\Scripts\python.exe D:/code/py_learn/34_ORM/test_sqlalchemy.py</div><div class="line">2023-01-31 11:16:02,181 INFO sqlalchemy.engine.Engine BEGIN (implicit)</div><div class="line">2023-01-31 11:16:02,184 INFO sqlalchemy.engine.Engine SELECT user_account.id, user_account.name, user_account.fullname</div><div class="line">FROM user_account</div><div class="line">WHERE user_account.name = ?</div><div class="line">2023-01-31 11:16:02,184 INFO sqlalchemy.engine.Engine [generated in 0.00011s] ('xiaowu',)</div><div class="line">2023-01-31 11:16:02,186 INFO sqlalchemy.engine.Engine SELECT address.id AS address_id, address.email_address AS address_email_address, address.user_id AS address_user_id</div><div class="line">FROM address</div><div class="line">WHERE ? = address.user_id</div><div class="line">2023-01-31 11:16:02,186 INFO sqlalchemy.engine.Engine [generated in 0.00010s] (1,)</div><div class="line">2023-01-31 11:16:02,188 INFO sqlalchemy.engine.Engine UPDATE user_account SET fullname=? WHERE user_account.id = ?</div><div class="line">2023-01-31 11:16:02,188 INFO sqlalchemy.engine.Engine [generated in 0.00010s] ('Zhang Xiaowu Hahaha', 1)</div><div class="line">2023-01-31 11:16:02,189 INFO sqlalchemy.engine.Engine INSERT INTO address (email_address, user_id) VALUES (?, ?)</div><div class="line">2023-01-31 11:16:02,189 INFO sqlalchemy.engine.Engine [generated in 0.00009s] ('xiaowu@ll.com', 1)</div><div class="line">2023-01-31 11:16:02,189 INFO sqlalchemy.engine.Engine COMMIT</div><div class="line"> </div><div class="line">Process finished with exit code 0</div></pre>
                </div>
            </section>
        </div>
    </div>

    <!-- cadres rouges par-dessus la capture -->
    <div class="mark mark-email"></div>
    <div class="mark mark-fullname"></div>
    <div class="mark mark-update"></div>
    <div class="mark mark-insert"></div>
</div>

</body>
</html>
```

FILE: styles.css
```css
* {
    box-sizing: border-box;
}

body {
    margin: 0;
    background-color: #3c3f41;
    color: #bbbbbb;
    font-family: "Noto Sans", "Noto Sans CJK SC", sans-serif;
    font-size: 12px;
    overflow: hidden;
}

.sprite {
    display: none;
}

.ide {
    position: relative;
    display: flex;
    flex-direction: column;
    height: 100vh;
}

.icon {
    width: 16px;
    height: 16px;
    flex: none;
}

/* fil d'ariane */
.crumbs {
    display: flex;
    align-items: center;
    height: 23px;
    padding-left: 7px;
    border-bottom: 1px solid #323232;
    color: #afb1b3;
}

.crumb-sep {
    width: 6px;
    height: 14px;
    margin: 0 6px 0 5px;
    color: #55585a;
}

.crumb-icon {
    margin: 0 3px 0 -5px;
    color: #afb1b3;
}

.main {
    flex: 1;
    display: flex;
    min-height: 0;
}

/* barre laterale */
.strip {
    width: 16px;
    flex: none;
    display: flex;
    flex-direction: column;
    border-right: 1px solid #323232;
    overflow: hidden;
}

.strip-tab {
    display: flex;
    flex-direction: column;
    align-items: center;
    height: 60px;
    color: #afb1b3;
    font-size: 11.500px;
}

.strip-tab span {
    writing-mode: vertical-rl;
    transform: rotate(180deg);
    line-height: 14px;
    margin-left: -1px;
}

.strip-icon {
    width: 12px;
    height: 12px;
    flex: none;
    margin-top: 3px;
}

.strip-active {
    height: 72px;
    padding-top: 9px;
    background-color: #2d2f30;
    color: #e0e0e0;
}

.strip-commit {
    margin-top: 11px;
    height: 70px;
}

.strip-structure {
    margin-top: auto;
    height: 85px;
}

.strip-favorites {
    height: 62px;
    flex: none;
}

.workspace {
    flex: 1;
    min-width: 0;
    display: flex;
    flex-direction: column;
}

.top {
    display: flex;
    height: 763px;
    flex: none;
}

/* Project */
.project {
    position: relative;
    width: 189px;
    flex: none;
    display: flex;
    flex-direction: column;
    border-right: 1px solid #323232;
    overflow: hidden;
}

.project-head {
    position: relative;
    display: flex;
    align-items: center;
    height: 27px;
    flex: none;
    padding-left: 9px;
    color: #afb1b3;
    background-color: #3c3f41;
    z-index: 2;
}

.project-title {
    margin-left: 4px;
}

.project-drop {
    width: 7px;
    height: 5px;
    margin-left: 1px;
}

.icon-cross {
    margin-left: 10px;
}

.icon-head {
    margin-left: 10px;
}

.icon-gear {
    margin-left: 10px;
}

.sep-head {
    margin: 0 0 0 8px;
}

.file-tree {
    position: relative;
    z-index: 1;
    flex: 1;
    margin-top: -11px;
    overflow: hidden;
    min-height: 0;
}

.row {
    display: flex;
    align-items: center;
    height: 20px;
    padding-left: 21px;
    white-space: nowrap;
}

.row-leaf {
    padding-left: 42px;
}

.row-file {
    padding-left: 60px;
}

.row-file span {
    margin-left: 3px;
}

.row-selected {
    background-color: #0d293e;
}

.arrow {
    width: 16px;
    height: 16px;
    flex: none;
    color: #9da0a2;
}

.folder {
    color: #90a4ae;
}

.folder-blue {
    color: #3d89a8;
}

.row .icon.folder,
.row .icon.folder-blue {
    margin-left: 5px;
}

.row-leaf .icon.folder {
    margin-left: 0;
}

.row > .icon + span {
    margin-left: 3px;
}

.txt-added {
    color: #629755;
}

.txt-ignored {
    color: #c75450;
}

.vscroll {
    position: absolute;
    top: 69px;
    right: 1px;
    width: 8px;
    height: 588px;
    background-color: #555759;
}

.hscroll-track {
    position: absolute;
    z-index: 2;
    left: 0;
    right: 0;
    bottom: 0;
    height: 6px;
    background-color: #50483e;
}

.hscroll {
    position: absolute;
    z-index: 2;
    left: 0;
    bottom: 1px;
    width: 142px;
    height: 8px;
    background-color: #5a5c5d;
}

/* volets des tables */
.pane {
    width: 671px;
    flex: none;
    display: flex;
    flex-direction: column;
    background-color: #2b2b2b;
    border-right: 1px solid #323232;
}

.tabs {
    display: flex;
    align-items: stretch;
    height: 27px;
    flex: none;
    background-color: #3c3f41;
    border-bottom: 1px solid #323232;
    overflow: hidden;
}

.tab {
    display: flex;
    align-items: center;
    padding: 0 6px 0 9px;
    white-space: nowrap;
    color: #afb1b3;
}

.tab > .icon {
    color: #9aa7b0;
    margin-right: 4px;
}

.tab-clipped {
    width: 93px;
    padding-left: 0;
    margin-right: 0;
}

.tab-close {
    width: 10px;
    height: 10px;
    margin-left: 7px;
    color: #606366;
}

.tab-active {
    background-color: #4b5052;
    box-shadow: inset 0 -3px 0 #4a88c7;
}

.tab-active span {
    letter-spacing: 0.150px;
}

.tab-active .tab-close {
    margin-left: 5px;
}

.tab-current {
    background-color: #4b5052;
    box-shadow: inset 0 -3px 0 #747a80;
    padding-right: 9px;
}

.tabs-more {
    margin: auto 6px auto auto;
    color: #afb1b3;
}

.toolbar {
    display: flex;
    align-items: center;
    height: 32px;
    flex: none;
    padding-left: 2px;
    background-color: #3c3f41;
    border-bottom: 1px solid #323232;
    white-space: nowrap;
    font-size: 11.400px;
}

.tb {
    display: flex;
    align-items: center;
    justify-content: center;
    width: 26px;
    height: 26px;
    flex: none;
    color: #afb1b3;
}

.tb-off {
    color: #5c6062;
}

.sep {
    display: block;
    width: 1px;
    height: 20px;
    flex: none;
    margin: 0 2px 0 4px;
    background-color: #515658;
}

.tb-label {
    display: flex;
    align-items: center;
    flex: none;
    color: #afb1b3;
    height: 26px;
}

.tb-rows {
    width: 50px;
    margin-left: 6px;
}

.mini-chev {
    width: 12px;
    height: 12px;
    flex: none;
    margin-left: 2px;
    color: #7d8082;
}

.tb-more {
    display: flex;
    justify-content: center;
    width: 18px;
    margin-left: 25px;
    color: #7d8082;
}

.tb-more-wide {
    margin-left: 55px;
}

.tb-format {
    width: 112px;
    margin-left: 10px;
}

.tb-source {
    width: 88px;
    padding-left: 10px;
}

.tb-source .icon {
    margin-right: 3px;
    color: #9aa7b0;
}

.tb-source-wide {
    width: 119px;
}

.filter {
    display: flex;
    align-items: center;
    height: 35px;
    flex: none;
    padding-left: 5px;
    border-bottom: 1px solid #323232;
    color: #6f6f6f;
    font-family: "DejaVu Sans Mono", monospace;
    font-size: 18.200px;
}

.filter .icon {
    margin-right: 9px;
    color: #8a8d8f;
}

/* grilles de donnees */
.grid {
    display: grid;
    grid-template-rows: 28px;
    grid-auto-rows: 28.900px;
    justify-content: start;
    font-family: "DejaVu Sans Mono", monospace;
    font-size: 18.300px;
    color: #a9b7c6;
}

.grid-address {
    grid-template-columns: 28px 91px 237.500px 158px;
}

.grid-account {
    grid-template-columns: 28px 91px 122px 267px;
}

.th-gutter {
    background-color: #313335;
}

.th {
    display: flex;
    align-items: center;
    padding: 0 4px 2px 3px;
    background-color: #3a3a3a;
    border-right: 1px solid #323232;
}

.th-num {
    justify-content: flex-end;
}

.th-name {
    flex: 1;
    margin-left: 5px;
}

.col-icon {
    position: relative;
    width: 17px;
    height: 16px;
    margin-right: 4px;
    color: #9aa7b0;
    flex: none;
}

.key {
    position: absolute;
    right: -1px;
    top: 3px;
    width: 8px;
    height: 14px;
}

.key-pk {
    color: #e8a33d;
}

.key-fk {
    color: #3ab0e0;
}

.th .icon {
    color: #9aa7b0;
}

.sort {
    width: 10px;
    height: 14px;
    margin: 0 2px 0 5px;
    flex: none;
    color: #a9b7c6;
}

.th-num .sort {
    margin-left: 6px;
}

.gutter {
    display: flex;
    align-items: center;
    padding: 0 0 2px 8px;
    background-color: #313335;
    color: #8f9ba6;
}

.td {
    display: flex;
    align-items: center;
    padding: 2px 4px 0;
    border-right: 1px solid #3d3f40;
    border-bottom: 1px solid #3d3f40;
    white-space: nowrap;
}

.td-num {
    justify-content: flex-end;
}

/* Database */
.database {
    flex: 1;
    min-width: 0;
    display: flex;
    flex-direction: column;
    border-left: 1px solid #323232;
}

.db-head {
    display: flex;
    align-items: center;
    height: 27px;
    flex: none;
    padding-left: 6px;
    border-bottom: 1px solid #323232;
    color: #afb1b3;
}

.db-toolbar {
    display: flex;
    align-items: center;
    height: 29px;
    flex: none;
    padding-left: 1px;
    border-bottom: 1px solid #323232;
}

.sep-db {
    margin: 0 4px 0 2px;
}

.tb-stop {
    color: #c75450;
}

.tb-ql {
    position: relative;
}

.tb-ql b {
    position: absolute;
    left: 7px;
    top: 9px;
    font-size: 7px;
    font-weight: 400;
    line-height: 10px;
}

.db-tree {
    padding-top: 1px;
}

.db-row {
    display: flex;
    align-items: center;
    height: 20px;
    white-space: nowrap;
}

.db-row > .icon + span {
    margin-left: 5px;
}

.lvl0 {
    padding-left: 2px;
}

.lvl1 {
    padding-left: 20px;
}

.lvl2 {
    padding-left: 38px;
}

.lvl3 {
    padding-left: 56px;
}

.db-row > .arrow + .icon {
    margin-left: 6px;
}

.db-live {
    position: relative;
    display: flex;
    margin-left: 6px;
}

.db-live::after {
    content: "";
    position: absolute;
    right: 0;
    bottom: 0;
    width: 4px;
    height: 4px;
    border-radius: 50%;
    background-color: #14c914;
}

.db-row > .db-name {
    margin-left: 6px;
}

.db-live-name {
    margin-left: 5px;
}

.db-none {
    padding-left: 42px;
}

.txt-dim {
    color: #737678;
    font-size: 11.400px;
}

.badge {
    display: inline-flex;
    justify-content: center;
    align-items: center;
    height: 16px;
    width: 20px;
    margin-left: 8px;
    border: 1px solid #4e5254;
    border-radius: 3px;
    color: #737678;
    font-size: 11px;
}

.badge-num {
    width: 11px;
    margin-left: 7px;
}

.count {
    margin-left: 7px;
    color: #737678;
}

/* Run */
.run {
    flex: 1;
    min-height: 0;
    display: flex;
    flex-direction: column;
    border-top: 1px solid #323232;
}

.run-head {
    display: flex;
    align-items: stretch;
    height: 27px;
    flex: none;
    padding-left: 6px;
    position: relative;
    z-index: 1;
}

.run-label {
    display: flex;
    align-items: center;
    color: #afb1b3;
}

.run-tab {
    display: flex;
    align-items: center;
    gap: 5px;
    width: 148px;
    margin-left: 7px;
    padding-left: 11px;
    box-shadow: 0 1px 0 #747a80, inset 0 -2px 0 #747a80;
    color: #bbbbbb;
}

.run-tab .tab-close {
    margin-left: 5px;
}

.run-body {
    flex: 1;
    min-height: 0;
    display: flex;
}

.run-tools {
    width: 28px;
    flex: none;
    display: flex;
    flex-direction: column;
    align-items: center;
    gap: 8px;
    padding-top: 6px;
    border-right: 1px solid #323232;
    color: #afb1b3;
}

.tool-wrench {
    margin-top: 2px;
}

.run-tools-second {
    width: 29px;
    gap: 10px;
    padding-top: 7px;
}

.hsep {
    display: block;
    width: 20px;
    height: 1px;
    flex: none;
    background-color: #515658;
    margin: 0;
}

.tool-off {
    color: #5c6062;
}

.tool-on {
    display: flex;
    align-items: center;
    justify-content: center;
    width: 22px;
    height: 22px;
    margin: -3px 0;
    border-radius: 3px;
    background-color: #4e5254;
}

.console {
    flex: 1;
    min-width: 0;
    margin: 0;
    padding: 0 0 0 16px;
    background-color: #2b2b2b;
    color: #bbbbbb;
    font-family: "DejaVu Sans Mono", monospace;
    font-size: 18.270px;
    overflow: hidden;
}

.console .line:first-child {
    margin-top: -19px;
}

.line {
    height: 28.020px;
    line-height: 28px;
    white-space: pre;
}

/* cadres rouges */
.mark {
    position: absolute;
    border: 3px solid #f5211a;
    border-radius: 3px;
}

.mark-email {
    left: 305px;
    top: 286px;
    width: 222px;
    height: 35px;
}

.mark-fullname {
    left: 1113px;
    top: 144px;
    width: 253px;
    height: 29px;
}

.mark-update {
    left: 675px;
    top: 1072px;
    width: 677px;
    height: 57px;
}

.mark-insert {
    left: 677px;
    top: 1133px;
    width: 679px;
    height: 59px;
}
```
